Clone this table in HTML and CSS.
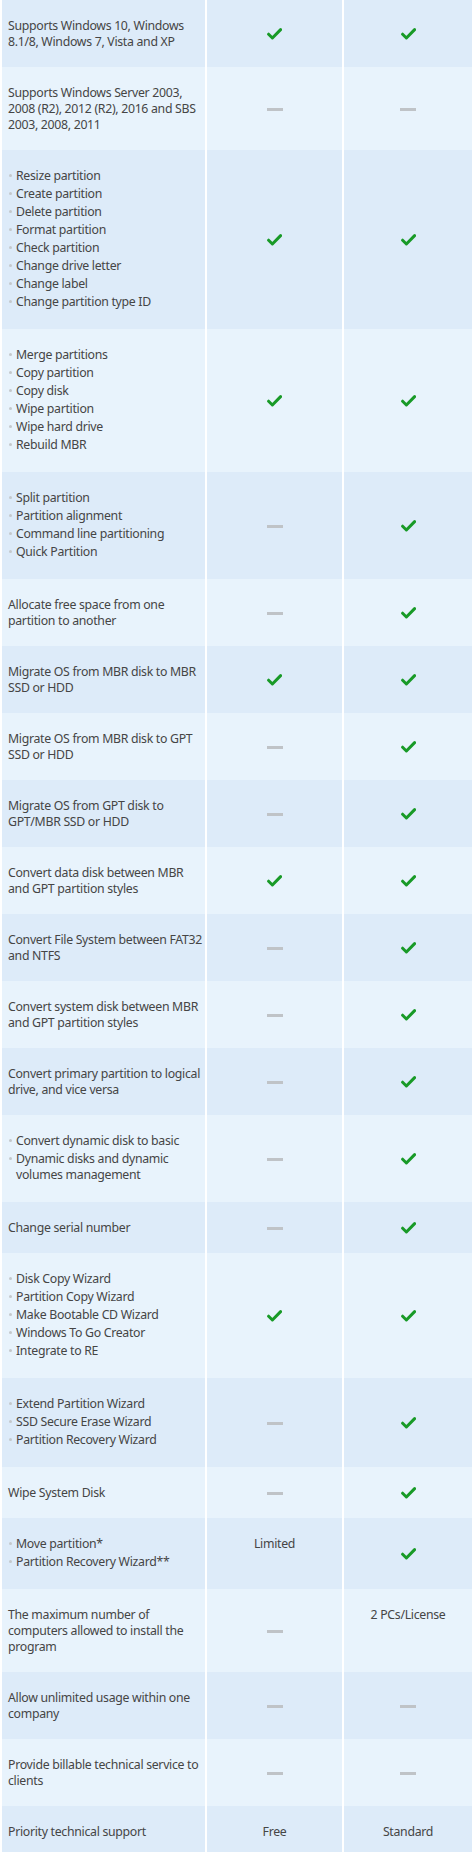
FILE: index.html
```html
<!DOCTYPE html>
<html lang="en">
<head>
<meta charset="utf-8">
<title>Edition comparison</title>
<link rel="stylesheet" href="styles.css">
</head>
<body>
<div class="table">
  <div class="row">
    <div class="feat">Supports Windows 10, Windows 8.1/8, Windows 7, Vista and XP</div>
    <div class="val"><span class="check"></span></div>
    <div class="val"><span class="check"></span></div>
  </div>
  <div class="row">
    <div class="feat">Supports Windows Server 2003, 2008 (R2), 2012 (R2), 2016 and SBS 2003, 2008, 2011</div>
    <div class="val"><span class="dash"></span></div>
    <div class="val"><span class="dash"></span></div>
  </div>
  <div class="row">
    <div class="feat"><ul><li>Resize partition</li><li>Create partition</li><li>Delete partition</li><li>Format partition</li><li>Check partition</li><li>Change drive letter</li><li>Change label</li><li>Change partition type ID</li></ul></div>
    <div class="val"><span class="check"></span></div>
    <div class="val"><span class="check"></span></div>
  </div>
  <div class="row">
    <div class="feat"><ul><li>Merge partitions</li><li>Copy partition</li><li>Copy disk</li><li>Wipe partition</li><li>Wipe hard drive</li><li>Rebuild MBR</li></ul></div>
    <div class="val"><span class="check"></span></div>
    <div class="val"><span class="check"></span></div>
  </div>
  <div class="row">
    <div class="feat"><ul><li>Split partition</li><li>Partition alignment</li><li>Command line partitioning</li><li>Quick Partition</li></ul></div>
    <div class="val"><span class="dash"></span></div>
    <div class="val"><span class="check"></span></div>
  </div>
  <div class="row">
    <div class="feat">Allocate free space from one partition to another</div>
    <div class="val"><span class="dash"></span></div>
    <div class="val"><span class="check"></span></div>
  </div>
  <div class="row">
    <div class="feat">Migrate OS from MBR disk to MBR SSD or HDD</div>
    <div class="val"><span class="check"></span></div>
    <div class="val"><span class="check"></span></div>
  </div>
  <div class="row">
    <div class="feat">Migrate OS from MBR disk to GPT SSD or HDD</div>
    <div class="val"><span class="dash"></span></div>
    <div class="val"><span class="check"></span></div>
  </div>
  <div class="row">
    <div class="feat">Migrate OS from GPT disk to GPT/MBR SSD or HDD</div>
    <div class="val"><span class="dash"></span></div>
    <div class="val"><span class="check"></span></div>
  </div>
  <div class="row">
    <div class="feat">Convert data disk between MBR and GPT partition styles</div>
    <div class="val"><span class="check"></span></div>
    <div class="val"><span class="check"></span></div>
  </div>
  <div class="row">
    <div class="feat">Convert File System between FAT32 and NTFS</div>
    <div class="val"><span class="dash"></span></div>
    <div class="val"><span class="check"></span></div>
  </div>
  <div class="row">
    <div class="feat">Convert system disk between MBR and GPT partition styles</div>
    <div class="val"><span class="dash"></span></div>
    <div class="val"><span class="check"></span></div>
  </div>
  <div class="row">
    <div class="feat">Convert primary partition to logical drive, and vice versa</div>
    <div class="val"><span class="dash"></span></div>
    <div class="val"><span class="check"></span></div>
  </div>
  <div class="row">
    <div class="feat"><ul><li>Convert dynamic disk to basic</li><li>Dynamic disks and dynamic volumes management</li></ul></div>
    <div class="val"><span class="dash"></span></div>
    <div class="val"><span class="check"></span></div>
  </div>
  <div class="row">
    <div class="feat">Change serial number</div>
    <div class="val"><span class="dash"></span></div>
    <div class="val"><span class="check"></span></div>
  </div>
  <div class="row">
    <div class="feat"><ul><li>Disk Copy Wizard</li><li>Partition Copy Wizard</li><li>Make Bootable CD Wizard</li><li>Windows To Go Creator</li><li>Integrate to RE</li></ul></div>
    <div class="val"><span class="check"></span></div>
    <div class="val"><span class="check"></span></div>
  </div>
  <div class="row">
    <div class="feat"><ul><li>Extend Partition Wizard</li><li>SSD Secure Erase Wizard</li><li>Partition Recovery Wizard</li></ul></div>
    <div class="val"><span class="dash"></span></div>
    <div class="val"><span class="check"></span></div>
  </div>
  <div class="row">
    <div class="feat">Wipe System Disk</div>
    <div class="val"><span class="dash"></span></div>
    <div class="val"><span class="check"></span></div>
  </div>
  <div class="row">
    <div class="feat"><ul><li>Move partition*</li><li>Partition Recovery Wizard**</li></ul></div>
    <div class="val top">Limited</div>
    <div class="val"><span class="check"></span></div>
  </div>
  <div class="row">
    <div class="feat">The maximum number of computers allowed to install the program</div>
    <div class="val"><span class="dash"></span></div>
    <div class="val top">2 PCs/License</div>
  </div>
  <div class="row">
    <div class="feat">Allow unlimited usage within one company</div>
    <div class="val"><span class="dash"></span></div>
    <div class="val"><span class="dash"></span></div>
  </div>
  <div class="row">
    <div class="feat">Provide billable technical service to clients</div>
    <div class="val"><span class="dash"></span></div>
    <div class="val"><span class="dash"></span></div>
  </div>
  <div class="row">
    <div class="feat">Priority technical support</div>
    <div class="val">Free</div>
    <div class="val">Standard</div>
  </div>
</div>
</body>
</html>
```
FILE: styles.css
```css
html, body {
  margin: 0;
  padding: 0;
  background: #ffffff;
}

body {
  font-family: "Noto Sans", "Open Sans", sans-serif;
  font-size: 12.3px;
  letter-spacing: -0.3px;
  line-height: 16px;
  color: #454545;
}

.table {
  width: 474px;
  display: flex;
  flex-direction: column;
}

.row {
  display: grid;
  grid-template-columns: 203px 135px 128px;
  column-gap: 2px;
  padding: 0 2px;
  background: #ffffff;
}

.row > div {
  background: #ddebf9;
}

.row:nth-child(even) > div {
  background: #e8f3fc;
}

.feat {
  padding: 18px 2px 17px 6px;
}

.feat ul {
  list-style: none;
  margin: 0 0 2px 0;
  padding: 0;
}

.feat li {
  display: flex;
  align-items: flex-start;
  margin-bottom: 2px;
}

.feat li:last-child {
  margin-bottom: 0;
}

.feat li::before {
  content: "";
  flex: none;
  width: 3px;
  height: 3px;
  border-radius: 50%;
  background: #c4c8cc;
  margin: 6px 4px 0 1px;
}

.val {
  display: flex;
  align-items: center;
  justify-content: center;
  text-align: center;
  padding: 18px 4px 17px 4px;
}

.val.top {
  align-items: flex-start;
}

.check {
  display: block;
  width: 15px;
  height: 12px;
  background: no-repeat center / 15px 12px url("data:image/svg+xml,%3Csvg xmlns='http://www.w3.org/2000/svg' viewBox='0 0 15 12'%3E%3Cpath d='M1.6 6.2 L5.4 10 L13.6 1.6' fill='none' stroke='%23189a27' stroke-width='3' stroke-linecap='round' stroke-linejoin='round'/%3E%3C/svg%3E");
}

.dash {
  display: block;
  width: 16px;
  height: 3px;
  background: #bfc3c7;
}
```
